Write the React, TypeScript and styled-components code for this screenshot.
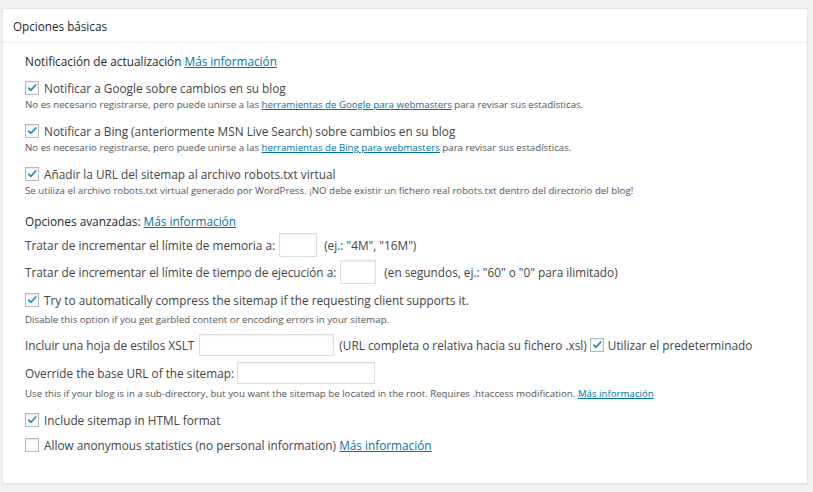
import React from "react";
import styled, { createGlobalStyle } from "styled-components";

const GlobalStyle = createGlobalStyle`
  html, body { margin: 0; padding: 0; background: #f1f1f1; }
  body { font-family: "Open Sans", "Noto Sans", sans-serif; color: #444; }
`;

const Page = styled.div`
  padding: 8px 5px 7px 2px;
`;

const Panel = styled.section`
  background: #fff;
  border: 1px solid #e5e5e5;
  box-shadow: 0 1px 1px rgba(0, 0, 0, 0.04);
`;

const PanelHeader = styled.h2`
  margin: 0;
  height: 33px;
  display: flex;
  align-items: center;
  padding-left: 10px;
  border-bottom: 1px solid #eee;
  font-size: 11.7px;
  font-weight: 400;
  color: #23282d;
`;

const PanelBody = styled.div`
  padding: 8px 12px 28px 22px;
  display: flex;
  flex-direction: column;
`;

const Block = styled.div<{ $mt?: number }>`
  margin-top: ${(p) => p.$mt ?? 0}px;
`;

const SectionTitle = styled(Block)`
  font-size: 11.8px;
  line-height: 20px;
  color: #23282d;
`;

const Row = styled(Block)<{ $h?: number }>`
  display: flex;
  align-items: center;
  height: ${(p) => p.$h ?? 20}px;
  font-size: 11.8px;
  color: #444;
  white-space: nowrap;
`;

const Desc = styled(Block)`
  font-size: 9.7px;
  line-height: 14px;
  color: #555;
  white-space: nowrap;
`;

const Link = styled.a`
  color: #0073aa;
  text-decoration: underline;
  cursor: pointer;
`;

const Box = styled.span`
  box-sizing: border-box;
  width: 14px;
  height: 14px;
  flex: none;
  border: 1px solid #b4b9be;
  background: #fff;
  box-shadow: inset 0 1px 2px rgba(0, 0, 0, 0.1);
  display: inline-flex;
  align-items: center;
  justify-content: center;
`;

const Label = styled.span<{ $gap?: number }>`
  margin-left: ${(p) => p.$gap ?? 5}px;
`;

const TextInput = styled.span<{ $w: number; $h: number }>`
  box-sizing: border-box;
  display: inline-block;
  flex: none;
  width: ${(p) => p.$w}px;
  height: ${(p) => p.$h}px;
  border: 1px solid #ddd;
  background: #fff;
  box-shadow: inset 0 1px 2px rgba(0, 0, 0, 0.07);
`;

const Gap = styled.span<{ $w: number }>`
  display: inline-block;
  width: ${(p) => p.$w}px;
  flex: none;
`;

function Check({ checked }: { checked?: boolean }) {
  return (
    <Box>
      {checked && (
        <svg width="12" height="12" viewBox="0 0 12 12">
          <path
            d="M1.6 6.3 L2.9 5.1 L4.9 7.1 L9.6 1.9 L10.9 3.1 L4.9 9.6 Z"
            fill="#1e8cbe"
          />
        </svg>
      )}
    </Box>
  );
}

export default function App() {
  return (
    <>
      <GlobalStyle />
      <Page>
        <Panel>
          <PanelHeader>Opciones básicas</PanelHeader>
          <PanelBody>
            <SectionTitle>
              Notificación de actualización <Link>Más información</Link>
            </SectionTitle>

            <Row $mt={7}>
              <Check checked />
              <Label>Notificar a Google sobre cambios en su blog</Label>
            </Row>
            <Desc>
              No es necesario registrarse, pero puede unirse a las{" "}
              <Link>herramientas de Google para webmasters</Link> para revisar sus
              estadísticas.
            </Desc>

            <Row $mt={9}>
              <Check checked />
              <Label>
                Notificar a Bing (anteriormente MSN Live Search) sobre cambios en su
                blog
              </Label>
            </Row>
            <Desc>
              No es necesario registrarse, pero puede unirse a las{" "}
              <Link>herramientas de Bing para webmasters</Link> para revisar sus
              estadísticas.
            </Desc>

            <Row $mt={9}>
              <Check checked />
              <Label>Añadir la URL del sitemap al archivo robots.txt virtual</Label>
            </Row>
            <Desc>
              Se utiliza el archivo robots.txt virtual generado por WordPress. ¡NO
              debe existir un fichero real robots.txt dentro del directorio del blog!
            </Desc>

            <SectionTitle $mt={13}>
              Opciones avanzadas: <Link>Más información</Link>
            </SectionTitle>

            <Row $mt={2} $h={24}>
              Tratar de incrementar el límite de memoria a:
              <Gap $w={4} />
              <TextInput $w={38} $h={24} />
              <Gap $w={7} />
              (ej.: "4M", "16M")
            </Row>

            <Row $mt={3} $h={24}>
              Tratar de incrementar el límite de tiempo de ejecución a:
              <Gap $w={4} />
              <TextInput $w={36} $h={24} />
              <Gap $w={8} />
              (en segundos, ej.: "60" o "0" para ilimitado)
            </Row>

            <Row $mt={6}>
              <Check checked />
              <Label>
                Try to automatically compress the sitemap if the requesting client
                supports it.
              </Label>
            </Row>
            <Desc $mt={3}>
              Disable this option if you get garbled content or encoding errors in
              your sitemap.
            </Desc>

            <Row $mt={7} $h={22}>
              Incluir una hoja de estilos XSLT
              <Gap $w={5} />
              <TextInput $w={135} $h={22} />
              <Gap $w={5} />
              (URL completa o relativa hacia su fichero .xsl)
              <Gap $w={3} />
              <Check checked />
              <Label $gap={4}>Utilizar el predeterminado</Label>
            </Row>

            <Row $mt={6} $h={22}>
              Override the base URL of the sitemap:
              <Gap $w={3} />
              <TextInput $w={138} $h={22} />
            </Row>
            <Desc $mt={3}>
              Use this if your blog is in a sub-directory, but you want the sitemap be
              located in the root. Requires .htaccess modification.{" "}
              <Link>Más información</Link>
            </Desc>

            <Row $mt={9}>
              <Check checked />
              <Label>Include sitemap in HTML format</Label>
            </Row>

            <Row $mt={5}>
              <Check />
              <Label>
                Allow anonymous statistics (no personal information){" "}
                <Link>Más información</Link>
              </Label>
            </Row>
          </PanelBody>
        </Panel>
      </Page>
    </>
  );
}
